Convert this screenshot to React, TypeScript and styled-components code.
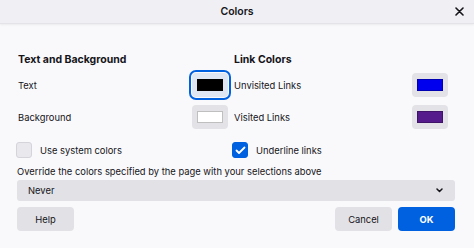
import styled, { createGlobalStyle } from "styled-components";

const Global = createGlobalStyle`
  html, body { margin: 0; padding: 0; }
  body {
    background: #f9f9fb;
    font-family: Inter, "Noto Sans", "Liberation Sans", sans-serif;
    color: #15141a;
    -webkit-font-smoothing: antialiased;
  }
`;

const Dialog = styled.div`
  width: 474px;
  height: 248px;
  background: #f9f9fb;
  display: flex;
  flex-direction: column;
  overflow: hidden;
`;

const TitleBar = styled.div`
  height: 23px;
  background: #f0f0f4;
  border-bottom: 1px solid #e4e4e8;
  box-shadow: 0 1px 2px rgba(0, 0, 0, 0.06);
  display: flex;
  align-items: center;
  justify-content: center;
  position: relative;
  font-size: 10.5px;
  font-weight: 600;
`;

const CloseButton = styled.div`
  position: absolute;
  right: 10px;
  top: 7px;
  width: 9px;
  height: 9px;
  display: flex;
`;

const Body = styled.div`
  padding: 29px 19px 0 17px;
  display: flex;
  flex-direction: column;
`;

const Columns = styled.div`
  display: grid;
  grid-template-columns: 212px 216px;
  column-gap: 4px;
`;

const Column = styled.div`
  display: flex;
  flex-direction: column;
`;

const Heading = styled.div`
  font-size: 10.5px;
  font-weight: 700;
  height: 14px;
  line-height: 14px;
  margin-bottom: 2px;
  margin-left: 1px;
`;

const Row = styled.div`
  display: flex;
  align-items: center;
  justify-content: space-between;
  height: 32px;
  font-size: 9.4px;
`;

const Label = styled.span`
  margin-left: 1px;
`;

const Swatch = styled.div<{ $focus?: boolean }>`
  width: 36px;
  height: 24px;
  box-sizing: border-box;
  border-radius: 4px;
  background: #e3e3e7;
  display: flex;
  align-items: center;
  justify-content: center;
  margin-right: 1px;
  ${(p) =>
    p.$focus &&
    `outline: 2px solid #0061e0; outline-offset: 1px; background: #dfe6f3;`}
`;

const Chip = styled.div<{ $color: string }>`
  width: 26px;
  height: 12px;
  background: ${(p) => p.$color};
  border: 1px solid rgba(0, 0, 0, 0.25);
  box-sizing: border-box;
`;

const CheckRow = styled.div`
  display: grid;
  grid-template-columns: 216px 216px;
  margin-top: 9px;
  margin-left: -1px;
`;

const CheckItem = styled.label`
  display: flex;
  align-items: center;
  gap: 8px;
  font-size: 9.4px;
  height: 16px;
`;

const Box = styled.span<{ $checked?: boolean }>`
  width: 16px;
  height: 16px;
  box-sizing: border-box;
  border-radius: 3px;
  display: flex;
  align-items: center;
  justify-content: center;
  background: ${(p) => (p.$checked ? "#0061e0" : "#e9e9ed")};
  border: 1px solid ${(p) => (p.$checked ? "#0061e0" : "#d4d4da")};
`;

const Caption = styled.div`
  font-size: 9.4px;
  margin-top: 7px;
  height: 14px;
  line-height: 14px;
`;

const Select = styled.div`
  margin-top: 1px;
  height: 21px;
  background: #e2e2e6;
  border-radius: 3px;
  display: flex;
  align-items: center;
  justify-content: space-between;
  padding: 0 12px 0 11px;
  font-size: 9.4px;
`;

const Footer = styled.div`
  display: flex;
  align-items: center;
  margin-top: 6px;
  gap: 6px;
`;

const Spacer = styled.div`
  flex: 1;
`;

const Button = styled.button<{ $primary?: boolean }>`
  width: 57px;
  height: 24px;
  border: none;
  border-radius: 4px;
  font-family: inherit;
  font-size: 9.4px;
  font-weight: ${(p) => (p.$primary ? 700 : 400)};
  background: ${(p) => (p.$primary ? "#0061e0" : "#e2e2e6")};
  color: ${(p) => (p.$primary ? "#ffffff" : "#15141a")};
  padding: 0;
`;

export default function App() {
  return (
    <Dialog>
      <Global />
      <TitleBar>
        Colors
        <CloseButton>
          <svg width="9" height="9" viewBox="0 0 9 9">
            <path d="M1 1L8 8M8 1L1 8" stroke="#15141a" strokeWidth="1.6" strokeLinecap="round" />
          </svg>
        </CloseButton>
      </TitleBar>
      <Body>
        <Columns>
          <Column>
            <Heading>Text and Background</Heading>
            <Row>
              <Label>Text</Label>
              <Swatch $focus>
                <Chip $color="#000000" />
              </Swatch>
            </Row>
            <Row>
              <Label>Background</Label>
              <Swatch>
                <Chip $color="#ffffff" />
              </Swatch>
            </Row>
          </Column>
          <Column>
            <Heading>Link Colors</Heading>
            <Row>
              <Label>Unvisited Links</Label>
              <Swatch>
                <Chip $color="#0000ee" />
              </Swatch>
            </Row>
            <Row>
              <Label>Visited Links</Label>
              <Swatch>
                <Chip $color="#551a8b" />
              </Swatch>
            </Row>
          </Column>
        </Columns>
        <CheckRow>
          <CheckItem>
            <Box />
            Use system colors
          </CheckItem>
          <CheckItem>
            <Box $checked>
              <svg width="11" height="9" viewBox="0 0 11 9">
                <path d="M1.5 4.5L4 7L9.5 1.5" fill="none" stroke="#fff" strokeWidth="1.8" strokeLinecap="round" strokeLinejoin="round" />
              </svg>
            </Box>
            Underline links
          </CheckItem>
        </CheckRow>
        <Caption>Override the colors specified by the page with your selections above</Caption>
        <Select>
          Never
          <svg width="7" height="5" viewBox="0 0 7 5">
            <path d="M1 1L3.5 3.5L6 1" fill="none" stroke="#15141a" strokeWidth="1.5" strokeLinecap="round" strokeLinejoin="round" />
          </svg>
        </Select>
        <Footer>
          <Button>Help</Button>
          <Spacer />
          <Button>Cancel</Button>
          <Button $primary>OK</Button>
        </Footer>
      </Body>
    </Dialog>
  );
}
